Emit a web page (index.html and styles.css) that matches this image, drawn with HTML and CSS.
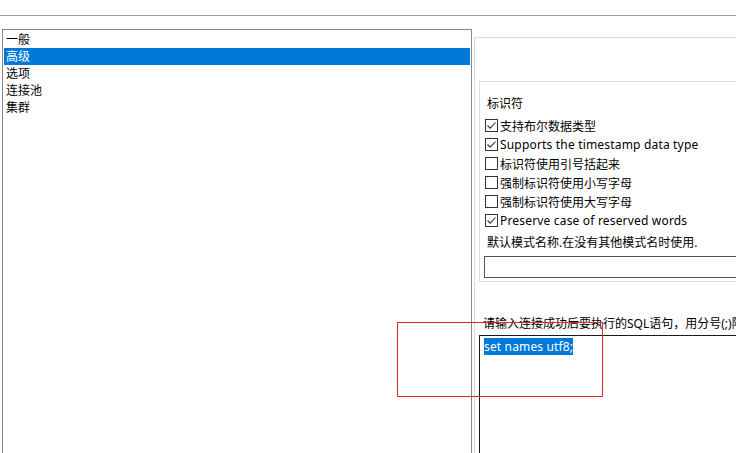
FILE: index.html
```html
<!DOCTYPE html>
<html lang="zh-CN">
<head>
<meta charset="utf-8">
<title>高级</title>
<link rel="stylesheet" href="styles.css">
</head>
<body>
<div class="topbar"></div>
<div class="main">
  <div class="listbox">
    <div class="item">一般</div>
    <div class="item selected">高级</div>
    <div class="item">选项</div>
    <div class="item">连接池</div>
    <div class="item">集群</div>
  </div>
  <div class="panel">
    <div class="group">
      <div class="group-label">标识符</div>
      <div class="check-list">
        <div class="check-row"><span class="box"><svg viewBox="0 0 11 11" width="11" height="11"><path d="M1.5 5.5 L4.2 8.2 L9.5 2.5" fill="none" stroke="#333" stroke-width="1.1"/></svg></span><span>支持布尔数据类型</span></div>
        <div class="check-row"><span class="box"><svg viewBox="0 0 11 11" width="11" height="11"><path d="M1.5 5.5 L4.2 8.2 L9.5 2.5" fill="none" stroke="#333" stroke-width="1.1"/></svg></span><span class="latin">Supports the timestamp data type</span></div>
        <div class="check-row"><span class="box"></span><span>标识符使用引号括起来</span></div>
        <div class="check-row"><span class="box"></span><span>强制标识符使用小写字母</span></div>
        <div class="check-row"><span class="box"></span><span>强制标识符使用大写字母</span></div>
        <div class="check-row"><span class="box"><svg viewBox="0 0 11 11" width="11" height="11"><path d="M1.5 5.5 L4.2 8.2 L9.5 2.5" fill="none" stroke="#333" stroke-width="1.1"/></svg></span><span class="latin">Preserve case of reserved words</span></div>
      </div>
      <div class="schema-label">默认模式名称.在没有其他模式名时使用.</div>
      <div class="input"></div>
    </div>
    <div class="sql-label">请输入连接成功后要执行的SQL语句，用分号(;)隔开</div>
    <div class="textarea"><span class="sel">set names utf8;</span></div>
  </div>
</div>
<div class="annotation"></div>
</body>
</html>
```
FILE: styles.css
```css
html, body {
  margin: 0;
  padding: 0;
  background: #ffffff;
  width: 736px;
  height: 453px;
  overflow: hidden;
  font-family: "Noto Sans", "Noto Sans CJK SC", sans-serif;
  font-size: 12px;
  color: #000;
}

.topbar {
  height: 15px;
  border-bottom: 1px solid #a0a0a0;
}

.main {
  display: flex;
  gap: 2px;
  padding: 13px 0 0 2px;
  height: 437px;
  overflow: hidden;
}

.listbox {
  flex: 0 0 470px;
  box-sizing: border-box;
  border: 1px solid #828790;
  padding: 1px 1px 0 1px;
  height: 480px;
}

.item {
  height: 17px;
  line-height: 17px;
  padding-left: 2px;
  white-space: nowrap;
}

.item.selected {
  background: #0078d7;
  color: #fff;
}

.panel {
  flex: 0 0 400px;
  margin-top: 8px;
  border: 1px solid #dadada;
  height: 480px;
  box-sizing: border-box;
  overflow: hidden;
}

.group {
  margin: 43px 0 0 4px;
  width: 360px;
  border: 1px solid #dcdcdc;
  padding: 13px 0 3px 0;
}

.group-label {
  height: 17px;
  line-height: 17px;
  padding-left: 7px;
  margin-bottom: 4px;
  white-space: nowrap;
}

.check-list {
  display: flex;
  flex-direction: column;
}

.check-row {
  height: 19px;
  display: flex;
  align-items: center;
  gap: 2px;
  padding-left: 5px;
  white-space: nowrap;
}

.latin {
  letter-spacing: 0.18px;
}

.box {
  width: 11px;
  height: 11px;
  border: 1px solid #333;
  flex: 0 0 11px;
  display: flex;
  background: #fff;
}

.box svg {
  display: block;
}

.schema-label {
  height: 17px;
  line-height: 17px;
  margin-top: 4px;
  padding-left: 7px;
  white-space: nowrap;
}

.input {
  margin: 5px 0 0 4px;
  height: 20px;
  border: 1px solid #545454;
  background: #fff;
}

.sql-label {
  margin: 33px 0 0 8px;
  height: 17px;
  line-height: 17px;
  white-space: nowrap;
}

.textarea {
  margin: 3px 0 0 4px;
  width: 360px;
  height: 200px;
  border: 1px solid #1a1a1a;
  padding: 2px 4px;
}

.sel {
  display: inline-block;
  height: 17px;
  line-height: 17px;
  background: #0078d7;
  color: #fff;
  letter-spacing: 0.15px;
}

.annotation {
  position: absolute;
  left: 397px;
  top: 322px;
  width: 204px;
  height: 73px;
  border: 1px solid #e3262b;
  pointer-events: none;
}
```
